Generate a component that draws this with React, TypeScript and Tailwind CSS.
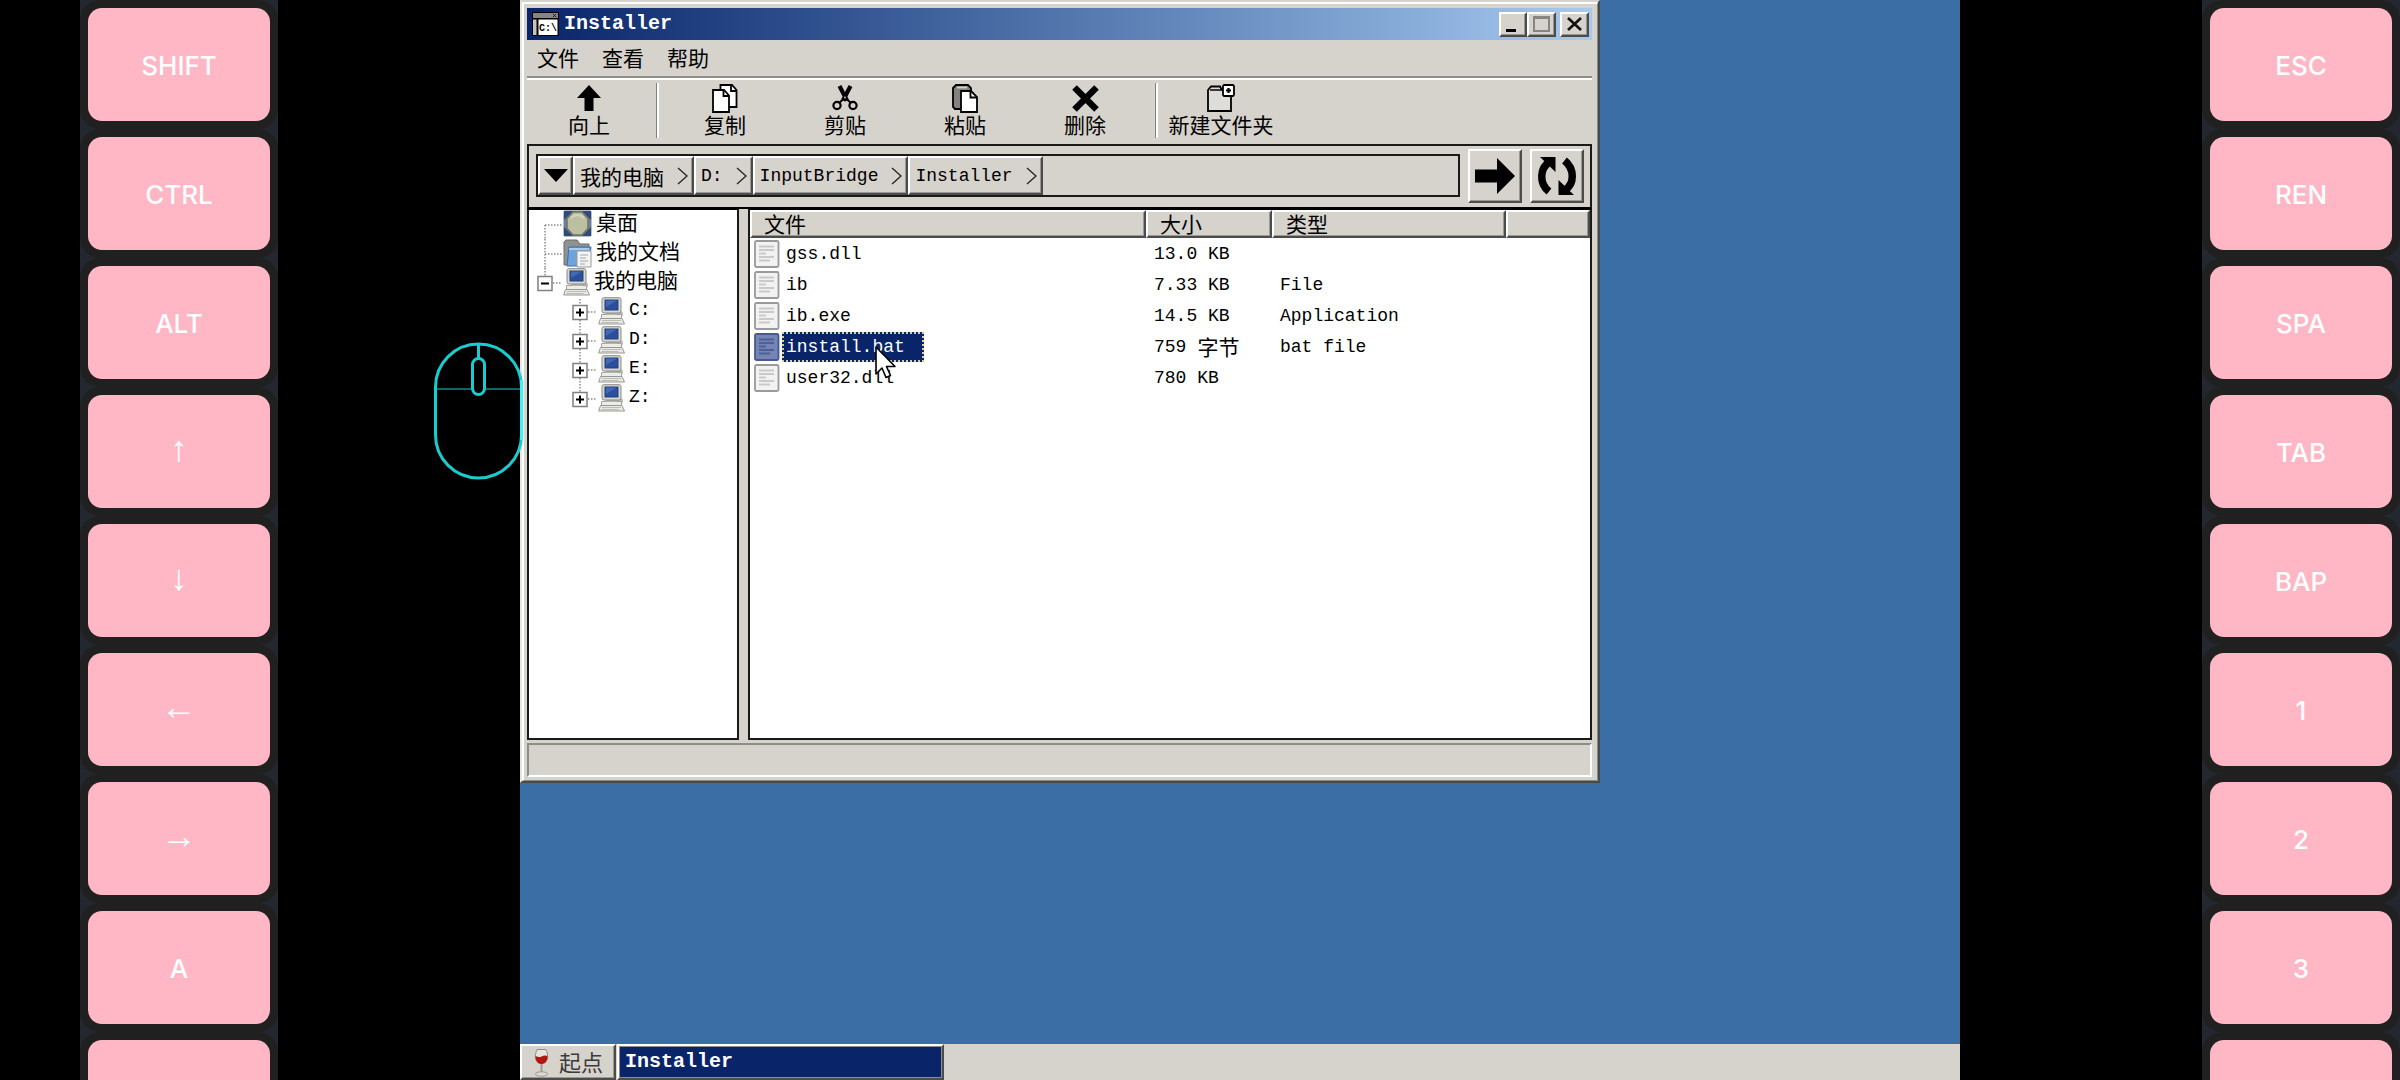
import type { ReactNode } from "react";

const CJK = "font-['Noto_Sans_CJK_SC',sans-serif] text-[21px] leading-[22px]";
const MONO = "font-['Liberation_Mono','Noto_Sans_CJK_SC',monospace] text-[18px] leading-[22px]";
const RAISED =
  "border-2 border-t-white border-l-white border-r-[#4c4c4a] border-b-[#4c4c4a] shadow-[inset_-1px_-1px_0_#9a9893] bg-[#d6d2cc]";

type KeyCap = { label: string; name?: string };

const leftKeys: KeyCap[] = [
  { label: "SHIFT" },
  { label: "CTRL" },
  { label: "ALT" },
  { label: "↑", name: "Up" },
  { label: "↓", name: "Down" },
  { label: "←", name: "Left" },
  { label: "→", name: "Right" },
  { label: "A" },
  { label: "", name: "More keys, left" },
];

const rightKeys: KeyCap[] = [
  { label: "ESC" },
  { label: "REN" },
  { label: "SPA" },
  { label: "TAB" },
  { label: "BAP" },
  { label: "1" },
  { label: "2" },
  { label: "3" },
  { label: "", name: "More keys, right" },
];

function KeyColumn({ keys }: { keys: KeyCap[] }) {
  return (
    <div className="w-[198px] shrink-0 bg-[#23272f]">
      {keys.map((k) => (
        <div key={k.label || k.name} className="h-[129px] rounded-[20px] bg-[#202020] p-2">
          <button
            aria-label={k.name}
            className="flex h-[113px] w-full items-center justify-center rounded-[14px] bg-[#ffb6c5] pt-[2px] font-['Inter','Liberation_Sans',sans-serif] text-[26px] font-medium text-white"
          >
            {k.name ? (
              <span className="pb-2 font-['Liberation_Serif',serif] text-[36px] leading-[36px] font-normal">{k.label}</span>
            ) : (
              k.label
            )}
          </button>
        </div>
      ))}
    </div>
  );
}

/* ---------- toolbar icons ---------- */

const UpIcon = () => (
  <svg width="24" height="26" viewBox="0 0 24 26" aria-hidden="true">
    <path d="M12 0 24 13H16.500V26H7.500V13H0Z" />
  </svg>
);

const CopyIcon = () => (
  <svg width="26" height="29" viewBox="0 0 26 29" fill="#fff" stroke="#000" strokeWidth="1.800" aria-hidden="true">
    <path d="M8.500 1H20l4.500 5v17H8.500Z" />
    <path d="M19 1.500V7h5.500" fill="none" />
    <path d="M1 6h11l5 5.500V28H1Z" />
    <path d="M11.500 6.500V12H17" fill="none" />
  </svg>
);

const CutIcon = () => (
  <svg width="26" height="26" viewBox="0 0 26 26" aria-hidden="true">
    <path d="M7.500 1 15 15.500M18.500 1 11 15.500" stroke="#000" strokeWidth="4.200" />
    <path d="m11.500 14-4 3.500M14.500 14l4 3.500" stroke="#000" strokeWidth="2" />
    <circle cx="5" cy="20.500" r="3.600" fill="none" stroke="#000" strokeWidth="2.200" />
    <circle cx="21" cy="20.500" r="3.600" fill="none" stroke="#000" strokeWidth="2.200" />
    <circle cx="13" cy="12.500" r="0.900" fill="#d6d2cc" />
  </svg>
);

const PasteIcon = () => (
  <svg width="26" height="29" viewBox="0 0 26 29" stroke="#000" strokeWidth="1.800" aria-hidden="true">
    <path d="M1 4 4 1h12l3 3v21H3l-2-2Z" fill="#84827f" />
    <path d="M5 3.500h10" stroke="#d6d2cc" />
    <path d="M9 7h10l6 6v15H9Z" fill="#fff" />
    <path d="M18.500 7.500v6H25" fill="none" />
  </svg>
);

const DeleteIcon = () => (
  <svg width="27" height="27" viewBox="0 0 27 27" aria-hidden="true">
    <path d="m2.500 2.500 22 22m0-22-22 22" stroke="#000" strokeWidth="6.500" />
  </svg>
);

const NewFolderIcon = () => (
  <svg width="28" height="28" viewBox="0 0 28 28" stroke="#000" aria-hidden="true">
    <path d="M1 27V6l3-3.500h9L15 6h9v21Z" fill="#deddda" strokeWidth="1.800" />
    <path d="M3 6h12" strokeWidth="1.500" />
    <path d="M17 1h9l1 1v9l-1 1h-9l-1-1V2Z" fill="#fff" strokeWidth="1.800" />
    <path d="M21.500 4v5M19 6.500h5" strokeWidth="2.200" />
  </svg>
);

const GoIcon = () => (
  <svg width="40" height="36" viewBox="0 0 40 36" aria-hidden="true">
    <path d="M0 11.500h22V0l18 18-18 18V24.500H0Z" />
  </svg>
);

const RefreshIcon = () => (
  <svg width="40" height="38" viewBox="0 0 40 38" aria-hidden="true">
    <path d="M12.500 5C3 11 1.500 26 12 34.500" fill="none" stroke="#000" strokeWidth="7.500" />
    <path d="M3 0h15.500v15Z" />
    <path d="M27.500 3.500C38 12 37.500 27 28 33" fill="none" stroke="#000" strokeWidth="7.500" />
    <path d="M37 38H21.500V23Z" />
  </svg>
);

/* ---------- tree and list icons ---------- */

const DesktopIcon = () => (
  <svg width="29" height="27" viewBox="0 0 29 27" aria-hidden="true">
    <rect x="0.500" y="0.500" width="28" height="26" rx="1.500" fill="#6d7f9f" />
    <path d="M1 1h9L1 10ZM28 1v9l-9-9ZM1 26v-9l9 9ZM28 26h-9l9-9Z" fill="#2f4a78" />
    <path d="M10 2h9l6 6.500v10L19 25h-9l-6-6.500v-10Z" fill="#bcc0a0" stroke="#6f7560" strokeWidth="1.500" />
    <path d="M8 8c4-4 9-4 13 0" fill="none" stroke="#d3d5bd" strokeWidth="2" />
  </svg>
);

const DocumentsIcon = () => (
  <svg width="29" height="29" viewBox="0 0 29 29" aria-hidden="true">
    <path d="M1 26V3l2-2h11l3 4h9v21Z" fill="#8f9291" stroke="#6b6e6d" />
    <path d="M4 27 6 8h22l-2 19Z" fill="#6fa3dc" stroke="#3a6ea8" />
    <path d="M6 10h20" stroke="#a9cbf0" strokeWidth="2" />
    <path d="M14 12h14v16H14Z" fill="#f4f4f4" stroke="#9a9a9a" />
    <path d="M17 16h8M17 19h6M17 22h8M17 25h5" stroke="#a5a5a5" strokeWidth="1.200" />
  </svg>
);

const ComputerIcon = () => (
  <svg width="27" height="28" viewBox="0 0 27 28" aria-hidden="true">
    <ellipse cx="22" cy="17" rx="3" ry="3" fill="#b9b9b5" />
    <path d="M3.500 17.500h20v4.500h-20Z" fill="#ecece8" stroke="#a5a5a0" />
    <rect x="8" y="15" width="11" height="3" fill="#b4b4b0" />
    <rect x="4" y="0.700" width="19" height="15.300" rx="2" fill="#d9d9d4" stroke="#8b8b86" />
    <rect x="7" y="3" width="13" height="10" fill="#2c4f9c" stroke="#23407f" />
    <path d="M8 3.500h11L8 10Z" fill="#4468b2" />
    <path d="M2.500 21.500H24l2.500 5.500H.700Z" fill="#e9e9e5" stroke="#989893" />
    <path d="M4 23.500h19M3.500 25.500h17" stroke="#bdbdb8" />
  </svg>
);

const FileIcon = ({ selected }: { selected?: boolean }) => (
  <svg width="26" height="28" viewBox="0 0 26 28" aria-hidden="true">
    <rect
      x="1"
      y="1"
      width="23.500"
      height="26"
      rx="1.500"
      fill={selected ? "#7484b4" : "#f3f2f2"}
      stroke={selected ? "#4a5a90" : "#9a9a9a"}
      strokeWidth="1.800"
    />
    <path
      d="M5 6.500h15M5 10h15M5 13.500h7M5 17h15M5 20.500h11"
      stroke={selected ? "#4d5f97" : "#cac9c9"}
      strokeWidth="1.800"
    />
  </svg>
);

const ConsoleIcon = () => (
  <svg width="27" height="24" viewBox="0 0 27 24" aria-hidden="true">
    <rect width="27" height="24" fill="#000" />
    <rect x="1" y="1" width="25" height="5" fill="#848484" />
    <path d="m21 2 3 3m0-3-3 3" stroke="#222" />
    <rect x="1" y="7.500" width="3.500" height="15.500" fill="#c4c4c4" />
    <rect x="6.500" y="7.500" width="19" height="15.500" fill="#fff" />
    <text x="7" y="19" fontFamily="Liberation Mono" fontSize="10" fontWeight="bold" fill="#000">
      C:\
    </text>
  </svg>
);

const WineIcon = () => (
  <svg width="15" height="29" viewBox="0 0 15 29" aria-hidden="true">
    <path d="M3 1.500h9c2 5 2.500 9 0 12-2 2.500-7 2.500-9 0-2.500-3-2-7 0-12Z" fill="#e6e4e0" stroke="#8e8c88" />
    <path d="M1.500 8c3 1 4 1.500 6 .5s4-1.500 6-.5c0 4-1.500 8-6 8s-6-4-6-8Z" fill="#b3150f" />
    <path d="M7.500 16v8" stroke="#9a9894" strokeWidth="1.800" />
    <ellipse cx="7.500" cy="26" rx="6" ry="2.200" fill="#dddbd7" stroke="#9a9894" />
  </svg>
);

/* ---------- folder tree ---------- */

type TreeNode = {
  label: string;
  icon: ReactNode;
  line: string;
  box?: "minus" | "plus";
  nested?: boolean;
};

const tree: TreeNode[] = [
  { label: "桌面", icon: <DesktopIcon />, line: "M16 15V29M16 15H33" },
  { label: "我的文档", icon: <DocumentsIcon />, line: "M16 0V29M16 15H33" },
  { label: "我的电脑", icon: <ComputerIcon />, line: "M16 0V8M24 15H33", box: "minus" },
  { label: "C:", icon: <ComputerIcon />, line: "M51 2V8M51 23V29M59 15H68", box: "plus", nested: true },
  { label: "D:", icon: <ComputerIcon />, line: "M51 0V8M51 23V29M59 15H68", box: "plus", nested: true },
  { label: "E:", icon: <ComputerIcon />, line: "M51 0V8M51 23V29M59 15H68", box: "plus", nested: true },
  { label: "Z:", icon: <ComputerIcon />, line: "M51 0V8M59 15H68", box: "plus", nested: true },
];

function TreeRow({ node }: { node: TreeNode }) {
  const w = node.nested ? 69 : 34;
  const cx = node.nested ? 51 : 16;
  return (
    <li className="flex h-[29px] items-start">
      <svg width={w} height="29" viewBox={`0 0 ${w} 29`} aria-hidden="true" className="shrink-0">
        <path d={node.line} stroke="#8c8c8c" strokeWidth="1.500" strokeDasharray="1.500 1.500" fill="none" />
        {node.box && (
          <>
            <rect x={cx - 7} y="8.500" width="14" height="14" fill="#fff" stroke="#808080" strokeWidth="1.500" />
            <path d={`M${cx - 4} 15.500h8`} stroke="#000" strokeWidth="2" />
            {node.box === "plus" && <path d={`M${cx} 11.500v8`} stroke="#000" strokeWidth="2" />}
          </>
        )}
      </svg>
      {node.icon}
      {node.nested ? (
        <button className={`${MONO} pt-[2px] pl-1 text-left`}>{node.label}</button>
      ) : (
        <button className={`${CJK} pl-1 text-left whitespace-nowrap`}>{node.label}</button>
      )}
    </li>
  );
}

/* ---------- data ---------- */

const files = [
  { name: "gss.dll", size: "13.0 KB", type: "" },
  { name: "ib", size: "7.33 KB", type: "File" },
  { name: "ib.exe", size: "14.5 KB", type: "Application" },
  { name: "install.bat", size: "759", unit: "字节", type: "bat file", selected: true },
  { name: "user32.dll", size: "780 KB", type: "" },
];

const clipboardTools = [
  { label: "复制", icon: <CopyIcon /> },
  { label: "剪贴", icon: <CutIcon /> },
  { label: "粘贴", icon: <PasteIcon /> },
  { label: "删除", icon: <DeleteIcon /> },
];

function Tool({ label, icon }: { label: string; icon: ReactNode }) {
  return (
    <button className="flex w-[120px] flex-col items-center">
      <span className="flex h-[30px] items-center justify-center">{icon}</span>
      <span className={`${CJK} whitespace-nowrap`}>{label}</span>
    </button>
  );
}

const Separator = () => <div className="h-[55px] w-[3px] border-l border-r-2 border-l-[#808080] border-r-white" />;

function Crumb({ label, cjk }: { label: string; cjk?: boolean }) {
  return (
    <button className={`${RAISED} flex h-full items-center gap-[13px] pr-1 pl-[5px]`}>
      <span className={cjk ? CJK : MONO}>{label}</span>
      <svg width="11" height="18" viewBox="0 0 11 18" aria-hidden="true">
        <path d="m1 1 9 8-9 8" fill="none" stroke="#222" strokeWidth="1.300" />
      </svg>
    </button>
  );
}

function ExplorerWindow() {
  return (
    <section className="w-[1080px] max-w-full border-2 border-t-[#d6d2cc] border-r-[#4a4a46] border-b-[#4a4a46] border-l-[#e8e5e0]">
      <div className="border-t-2 border-r border-b border-l-2 border-t-white border-r-[#8a8a86] border-b-[#8a8a86] border-l-white bg-[#d6d2cc] pt-1 pr-[5px] pb-[3px] pl-[3px]">
        <header className="flex h-8 items-center bg-linear-to-r from-[#0a246a] to-[#a6caf0] pr-[3px] pl-[5px]">
          <ConsoleIcon />
          <h1 className="flex-1 pl-[5px] font-['Liberation_Mono',monospace] text-[20px] leading-[24px] font-bold text-white">
            Installer
          </h1>
          <button aria-label="Minimize" className={`${RAISED} flex h-[25px] w-[28px] items-end justify-center pb-[3px]`}>
            <span className="mr-1 h-[3px] w-[10px] bg-black" />
          </button>
          <button aria-label="Maximize" className={`${RAISED} flex h-[25px] w-[29px] items-center justify-center`}>
            <span className="h-[16px] w-[17px] border-2 border-t-3 border-[#87857f]" />
          </button>
          <button aria-label="Close" className={`${RAISED} ml-1 flex h-[25px] w-[29px] items-center justify-center`}>
            <svg width="15" height="14" viewBox="0 0 15 14" aria-hidden="true">
              <path d="m1 1 13 12M14 1 1 13" stroke="#111" strokeWidth="2.600" />
            </svg>
          </button>
        </header>

        <nav className="flex h-[38px] items-center gap-[23px] border-b-2 border-[#8f8d89] pb-[2px] pl-[10px]">
          {["文件", "查看", "帮助"].map((m) => (
            <button key={m} className={CJK}>
              {m}
            </button>
          ))}
        </nav>

        <div className="flex h-[66px] border-t-2 border-white pt-[3px] pl-[2px]">
          <Tool label="向上" icon={<UpIcon />} />
          <div className="pr-[6px] pl-[7px]">
            <Separator />
          </div>
          {clipboardTools.map((t) => (
            <Tool key={t.label} {...t} />
          ))}
          <div className="pr-[3px] pl-[10px]">
            <Separator />
          </div>
          <Tool label="新建文件夹" icon={<NewFolderIcon />} />
        </div>

        <div className="flex h-[65px] items-center gap-2 border-2 border-[#1a1a18] border-b-black pr-[6px] pb-[2px] pl-[7px]">
          <div className="flex h-[43px] flex-1 border-2 border-[#1a1a18]">
            <button aria-label="History" className={`${RAISED} flex w-[35px] items-center justify-center`}>
              <svg width="24" height="13" viewBox="0 0 24 13" aria-hidden="true">
                <path d="M0 0h24L12 13Z" />
              </svg>
            </button>
            <Crumb label="我的电脑" cjk />
            <Crumb label="D:" />
            <Crumb label="InputBridge" />
            <Crumb label="Installer" />
          </div>
          <button aria-label="Go" className={`${RAISED} flex size-[54px] items-center justify-center`}>
            <GoIcon />
          </button>
          <button aria-label="Refresh" className={`${RAISED} flex size-[54px] items-center justify-center`}>
            <RefreshIcon />
          </button>
        </div>

        <div className="flex h-[531px] gap-[9px]">
          <ul className="w-[212px] shrink-0 border-2 border-t border-[#1a1a18] border-t-black bg-white">
            {tree.map((n) => (
              <TreeRow key={n.label} node={n} />
            ))}
          </ul>

          <div className="flex-1 border-2 border-t border-[#1a1a18] border-t-black bg-white">
            <table className="w-full table-fixed border-separate border-spacing-0">
              <colgroup>
                <col className="w-[396px]" />
                <col className="w-[126px]" />
                <col className="w-[234px]" />
                <col />
              </colgroup>
              <thead>
                <tr className={`${CJK} text-left`}>
                  <th className={`${RAISED} h-7 pb-[2px] pl-3 font-normal`}>文件</th>
                  <th className={`${RAISED} h-7 pb-[2px] pl-3 font-normal`}>大小</th>
                  <th className={`${RAISED} h-7 pb-[2px] pl-3 font-normal`}>类型</th>
                  <td className={`${RAISED} h-7`} />
                </tr>
              </thead>
              <tbody className={MONO}>
                {files.map((f) => (
                  <tr key={f.name} className="h-[31px]">
                    <td className="p-0">
                      <div className="flex items-center gap-[2px] pl-[4px]">
                        <FileIcon selected={f.selected} />
                        {f.selected ? (
                          <button className="h-[30px] border-2 border-dotted border-[#d8cf9a] bg-[#0a246a] pr-[17px] pl-[2px] text-white">
                            {f.name}
                          </button>
                        ) : (
                          <button className="h-[30px] border-2 border-transparent pl-[2px]">{f.name}</button>
                        )}
                      </div>
                    </td>
                    <td className="p-0 pl-2">
                      <div className="flex items-center gap-[11px] whitespace-nowrap">
                        <span>{f.size}</span>
                        {f.unit && <span className={`${CJK} pb-[2px]`}>{f.unit}</span>}
                      </div>
                    </td>
                    <td className="p-0 pl-2">{f.type}</td>
                    <td className="p-0" />
                  </tr>
                ))}
              </tbody>
            </table>
          </div>
        </div>

        <footer className="mt-[3px] h-[34px] border-2 border-t-[#8f8d89] border-r-white border-b-white border-l-[#8f8d89]" />
      </div>
    </section>
  );
}

const Pointer = () => (
  <svg
    width="22"
    height="34"
    viewBox="0 0 22 34"
    className="pointer-events-none absolute top-[346px] left-[355px]"
    aria-hidden="true"
  >
    <path
      d="M1 1v27l6-6 4 9.500 4.500-2L11.500 20.500H20Z"
      fill="#fff"
      stroke="#000"
      strokeWidth="1.600"
      strokeLinejoin="round"
    />
  </svg>
);

const MouseOverlay = () => (
  <svg
    width="92"
    height="138"
    viewBox="0 0 92 138"
    fill="none"
    stroke="#17cdd0"
    className="pointer-events-none absolute top-[342px] -left-[87px]"
    aria-hidden="true"
  >
    <path d="M2.500 45a43 43 0 0 1 86 0v48a43 43 0 0 1-86 0Z" strokeWidth="3" />
    <path d="M45.500 2v14" strokeWidth="3" />
    <rect x="39.500" y="16.500" width="12" height="36" rx="6" strokeWidth="3" />
    <path d="M3 47h36M52 47h37" strokeWidth="1" />
    <path d="M88.500 38v60" stroke="#3ff3f5" strokeWidth="3" />
  </svg>
);

export default function App() {
  return (
    <div className="flex h-screen overflow-hidden bg-black pl-20 text-black">
      <KeyColumn keys={leftKeys} />

      <main className="relative mx-[242px] flex min-w-0 flex-1 flex-col bg-[#3a6ea5]">
        <ExplorerWindow />

        <div className="mt-auto flex h-9 bg-[#d6d2cc]">
          <button className={`${RAISED} flex w-24 items-center gap-[10px] pl-3 text-[#3c3b39]`}>
            <WineIcon />
            <span className="pb-[3px] font-['Noto_Sans_CJK_SC',sans-serif] text-[22px] leading-[22px] whitespace-nowrap">
              起点
            </span>
          </button>
          <button className={`${RAISED} ml-[1px] w-[327px]`}>
            <span className="flex h-full items-center border border-[#8f8d89] bg-[#0a246a] pl-[5px] font-['Liberation_Mono',monospace] text-[20px] leading-[24px] font-bold text-white">
              Installer
            </span>
          </button>
        </div>

        <Pointer />
        <MouseOverlay />
      </main>

      <KeyColumn keys={rightKeys} />
    </div>
  );
}
